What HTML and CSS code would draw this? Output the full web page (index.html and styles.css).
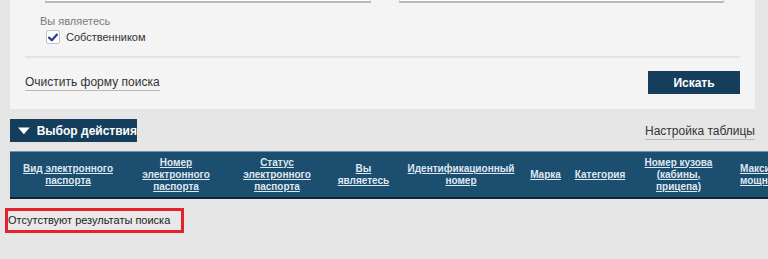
FILE: index.html
```html
<!DOCTYPE html>
<html lang="ru">
<head>
    <meta charset="UTF-8">
    <title>Поиск электронных паспортов</title>
    <link rel="stylesheet" href="styles.css">
</head>
<body>
    <!-- Форма поиска -->
    <div class="search-panel">
        <div class="field-row">
            <div class="field"></div>
            <div class="field"></div>
        </div>

        <div class="owner-block">
            <div class="owner-label">Вы являетесь</div>
            <label class="check">
                <span class="check-box">
                    <svg width="10" height="9" viewBox="0 0 10 9"><path d="M1 4.6 L3.8 7.2 L9 1.6" fill="none" stroke="#2b3f8c" stroke-width="2.2" stroke-linecap="round" stroke-linejoin="round"/></svg>
                </span>
                Собственником
            </label>
        </div>

        <div class="search-actions">
            <a class="link-dashed" href="#">Очистить форму поиска</a>
            <button class="btn">Искать</button>
        </div>
    </div>

    <!-- Панель над таблицей -->
    <div class="toolbar">
        <button class="btn btn-action">
            <svg width="13" height="8" viewBox="0 0 13 8"><path d="M0 0 H13 L6.5 7.5 Z" fill="#fff"/></svg>
            Выбор действия
        </button>
        <a class="link-dashed" href="#">Настройка таблицы</a>
    </div>

    <div class="table-wrap">
        <table class="results">
            <colgroup>
                <col style="width:116px">
                <col style="width:100px">
                <col style="width:102px">
                <col style="width:71px">
                <col style="width:124px">
                <col style="width:45px">
                <col style="width:64px">
                <col style="width:93px">
                <col style="width:120px">
            </colgroup>
            <thead>
                <tr>
                    <th><a href="#">Вид электронного паспорта</a></th>
                    <th><a href="#">Номер электронного паспорта</a></th>
                    <th><a href="#">Статус электронного паспорта</a></th>
                    <th><a href="#">Вы являетесь</a></th>
                    <th><a href="#">Идентификационный номер</a></th>
                    <th><a href="#">Марка</a></th>
                    <th><a href="#">Категория</a></th>
                    <th><a href="#">Номер кузова (кабины, прицепа)</a></th>
                    <th class="left"><a href="#">Максимальная мощность</a></th>
                </tr>
            </thead>
        </table>
    </div>

    <div class="no-results">Отсутствуют результаты поиска</div>
</body>
</html>
```

FILE: styles.css
```css
body {
    margin: 0;
    background: #e6e6e6;
    font-family: "Liberation Sans", Arial, sans-serif;
    color: #333;
    overflow: hidden;
}

/* Форма поиска */
.search-panel {
    margin: 0 13px 0 10px;
    padding: 0 15px;
    height: 109px;
    background: #f4f4f4;
    box-sizing: border-box;
}

.field-row {
    display: flex;
    gap: 28px;
    padding: 0 16px 0 20px;
}

.field {
    flex: 1;
    height: 1px;
    background: #fff;
    border-bottom: 2px solid #b9b9b9;
    border-left: 1px solid #d0d0d0;
    border-right: 1px solid #d0d0d0;
}

.owner-block {
    padding: 11px 0 12px 15px;
    border-bottom: 2px solid #e3e3e3;
}

.owner-label {
    font-size: 11px;
    line-height: 14px;
    color: #7a7a7a;
}

.check {
    display: flex;
    align-items: center;
    gap: 6px;
    margin: 2px 0 0 6px;
    font-size: 11px;
    line-height: 14px;
    color: #333;
}

.check-box {
    width: 12px;
    height: 12px;
    border: 1px solid #c4c4c4;
    border-radius: 2px;
    background: #fff;
    display: flex;
    align-items: center;
    justify-content: center;
}

.search-actions {
    display: flex;
    justify-content: space-between;
    align-items: center;
    margin-top: 13px;
}

.link-dashed {
    font-size: 12px;
    line-height: 15px;
    color: #333;
    text-decoration: none;
    border-bottom: 1px solid #b8b8b8;
    white-space: nowrap;
}

.btn {
    border: none;
    background: #143e5c;
    color: #fff;
    font-family: inherit;
    font-size: 12px;
    font-weight: bold;
    height: 23px;
    width: 92px;
    padding: 0;
    white-space: nowrap;
}

/* Панель над таблицей */
.toolbar {
    display: flex;
    justify-content: space-between;
    align-items: center;
    margin: 10px 13px 0 10px;
}

.btn-action {
    width: 127px;
    display: flex;
    align-items: center;
    gap: 7px;
    padding-left: 8px;
}

.toolbar .link-dashed {
    margin-top: 2px;
}

/* Таблица */
.table-wrap {
    margin: 9px 0 0 10px;
    overflow: hidden;
}

.results {
    border-collapse: collapse;
    table-layout: fixed;
    width: 835px;
    background: #1c4e70;
    border-top: 1px solid #6f93ad;
    border-bottom: 2px solid #0d2434;
}

.results th {
    height: 45px;
    padding: 0 2px;
    font-size: 10px;
    line-height: 12px;
    font-weight: bold;
    text-align: center;
    vertical-align: middle;
}

.results th.left {
    text-align: left;
    padding-left: 15px;
}

.results th a {
    color: #dfe8f0;
}

.no-results {
    display: inline-block;
    margin: 9px 0 0 5px;
    width: 173px;
    border: 3px solid #e3222b;
    padding: 2px 0 3px 0;
    font-size: 11px;
    line-height: 14px;
    color: #222;
    background: #e8e8e8;
}
```
